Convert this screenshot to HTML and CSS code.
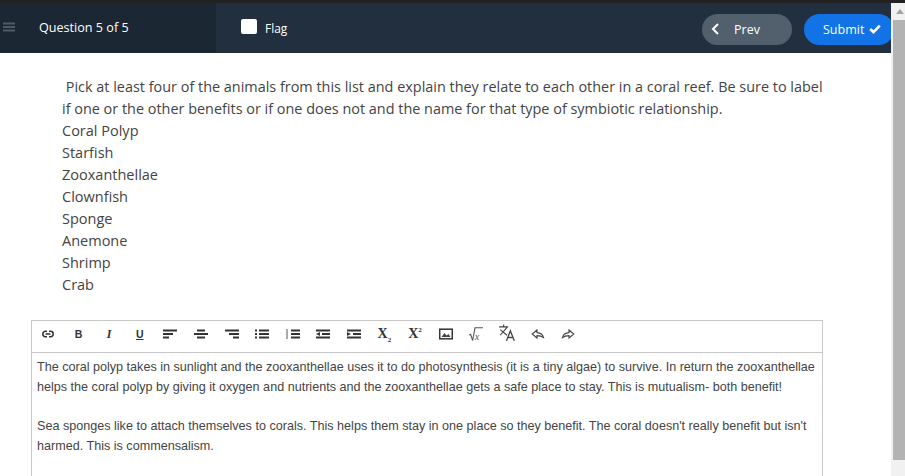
FILE: index.html
```html
<!DOCTYPE html>
<html lang="en">
<head>
<meta charset="utf-8">
<title>Question 5 of 5</title>
<link rel="stylesheet" href="styles.css">
</head>
<body>
<div class="topstrip"></div>
<div class="window">
  <div class="page">
    <header class="header">
      <div class="header-left">
        <svg class="menu" width="12" height="10" viewBox="0 0 12 10"><path d="M0 1.5h12M0 5h12M0 8.5h12" stroke="#4d5b68" stroke-width="2"/></svg>
        <span class="qcount">Question 5 of 5</span>
      </div>
      <div class="header-right">
        <label class="flag"><span class="checkbox"></span><span>Flag</span></label>
        <div class="nav">
          <button class="btn btn-prev"><svg width="9" height="12" viewBox="0 0 9 12"><path d="M7 1 2 6l5 5" fill="none" stroke="#fff" stroke-width="2"/></svg><span>Prev</span></button>
          <button class="btn btn-submit"><span>Submit</span><svg width="12" height="10" viewBox="0 0 12 10"><path d="M1.2 5 4.5 8.2 10.8 1.6" fill="none" stroke="#fff" stroke-width="2.6"/></svg></button>
        </div>
      </div>
    </header>
    <main class="content">
      <div class="question">
        <p class="prompt">&nbsp;Pick at least four of the animals from this list and explain they relate to each other in a coral reef. Be sure to label if one or the other benefits or if one does not and the name for that type of symbiotic relationship.</p>
        <ul class="animals">
          <li>Coral Polyp</li>
          <li>Starfish</li>
          <li>Zooxanthellae</li>
          <li>Clownfish</li>
          <li>Sponge</li>
          <li>Anemone</li>
          <li>Shrimp</li>
          <li>Crab</li>
        </ul>
      </div>
      <section class="editor">
        <div class="toolbar">
          <svg class="ti" viewBox="0 0 14 14"><path d="M6 4.3H4.5a2.7 2.7 0 0 0 0 5.4H6M8 4.3h1.500a2.700 2.700 0 0 1 0 5.400H8M4.500 7h5" fill="none" stroke="#333" stroke-width="1.500"/></svg>
          <span class="ti tb b">B</span>
          <span class="ti tb i">I</span>
          <span class="ti tb u">U</span>
          <svg class="ti" viewBox="0 0 14 14"><path d="M0 3.5h14M0 7h10M0 10.5h6" stroke="#333" stroke-width="2"/></svg>
          <svg class="ti" viewBox="0 0 14 14"><path d="M3 3.5h8M0 7h14M3 10.5h8" stroke="#333" stroke-width="2"/></svg>
          <svg class="ti" viewBox="0 0 14 14"><path d="M0 3.5h14M4 7h10M8 10.5h6" stroke="#333" stroke-width="2"/></svg>
          <svg class="ti" viewBox="0 0 14 14"><path d="M4 3.5h10M4 7h10M4 10.5h10M0 3.5h2M0 7h2M0 10.5h2" stroke="#333" stroke-width="2"/></svg>
          <svg class="ti" viewBox="0 0 14 14"><path d="M5 3.5h9M5 7h9M5 10.5h9" stroke="#333" stroke-width="2"/><path d="M0 3h2M0 5h2M0 7h2M0 9h2M0 11h2" stroke="#555" stroke-width="1"/></svg>
          <svg class="ti" viewBox="0 0 14 14"><path d="M0 3.5h14M6 7h8M0 10.5h14" stroke="#333" stroke-width="2"/><path d="M4 5v4L0 7z" fill="#333"/></svg>
          <svg class="ti" viewBox="0 0 14 14"><path d="M0 3.5h14M6 7h8M0 10.5h14" stroke="#333" stroke-width="2"/><path d="M0 5v4l4-2z" fill="#333"/></svg>
          <span class="ti script">X<sub>2</sub></span>
          <span class="ti script">X<sup>2</sup></span>
          <svg class="ti" viewBox="0 0 14 14"><rect x=".7" y="2.2" width="12.6" height="9.6" fill="none" stroke="#333" stroke-width="1.5"/><path d="M2.5 10 5.500 6l2 2.500L9.500 7l2 3z" fill="#444"/></svg>
          <svg class="ti" viewBox="0 0 14 14"><path d="M0 8 1.600 7.200 3.600 13.500 6 .8H14" fill="none" stroke="#555" stroke-width="1.100"/><text x="5.800" y="12.500" class="mathx">x</text></svg>
          <svg class="ti wide" viewBox="0 0 16 16"><path d="M1 2.500h8M5 .5v2M8 3 2 10M2 5l6 5" fill="none" stroke="#444" stroke-width="1"/><path d="M7.500 15 11 6l3.500 9M9 12h4.500" fill="none" stroke="#444" stroke-width="1.200"/></svg>
          <svg class="ti" viewBox="0 0 14 14"><path d="M6 3 1.200 7 6 11V8.600c2.500 0 4.500.4 6.500 2-.6-3-3-4.800-6.500-5z" fill="none" stroke="#444" stroke-width="1.100"/></svg>
          <svg class="ti" viewBox="0 0 14 14"><path d="M8 3l4.800 4L8 11V8.600c-2.500 0-4.500.4-6.500 2 .6-3 3-4.800 6.500-5z" fill="none" stroke="#444" stroke-width="1.100"/></svg>
        </div>
        <div class="body">
          <p>The coral polyp takes in sunlight and the zooxanthellae uses it to do photosynthesis (it is a tiny algae) to survive. In return the zooxanthellae helps the coral polyp by giving it oxygen and nutrients and the zooxanthellae gets a safe place to stay. This is mutualism- both benefit!</p>
          <p>Sea sponges like to attach themselves to corals. This helps them stay in one place so they benefit. The coral doesn't really benefit but isn't harmed. This is commensalism.</p>
        </div>
      </section>
    </main>
  </div>
  <div class="scrollbar">
    <div class="arrow"></div>
    <div class="thumb"></div>
  </div>
</div>
</body>
</html>
```
FILE: styles.css
```css
* { box-sizing: border-box; }
html, body { margin: 0; height: 100%; overflow: hidden; background: #fff; }
body { display: flex; flex-direction: column; font-family: "Open Sans", sans-serif; }
.topstrip { height: 3px; background: #222; flex: none; }
.window { flex: 1; display: flex; min-height: 0; }
.page { width: 891px; flex: none; overflow: hidden; }

.header { height: 50px; display: flex; background: #212f3e; color: #fff; }
.header-left { width: 216px; flex: none; display: flex; align-items: center; padding: 0 0 2px 3px; background: #1b2733; }
.menu { flex: none; }
.qcount { margin-left: 24px; font-size: 12.6px; }
.header-right { flex: 1; display: flex; align-items: center; justify-content: space-between; padding-left: 25px; }
.flag { display: flex; align-items: center; gap: 8px; font-size: 11.9px; }
.checkbox { width: 16px; height: 15px; background: #fff; border-radius: 2px; margin-bottom: 3px; }
.nav { display: flex; gap: 12px; margin: 2px -3px 0 0; }
.btn { height: 31px; width: 90px; border: 0; border-radius: 16px; color: #fff; font: 12.5px "Open Sans", sans-serif; display: flex; align-items: center; padding: 0; }
.btn-prev { background: #52606d; padding-left: 9px; gap: 14px; }
.btn-submit { background: #1273e6; padding-left: 19px; gap: 5px; }

.content { padding-top: 23px; }
.question { margin-left: 62px; width: 765px; color: #444; font-size: 14.43px; line-height: 22px; }
.prompt { margin: 0; }
.animals { list-style: none; margin: 0; padding: 0; font-size: 14.5px; }

.editor { margin: 24px 0 0 31px; width: 792px; border: 1px solid #c8c8c8; border-bottom: 0; height: 161px; overflow: hidden; }
.toolbar { height: 32px; border-bottom: 1px solid #c8c8c8; display: flex; align-items: center; padding: 0 0 5px 9px; gap: 16.6px; color: #333; }
.ti { width: 14px; height: 14px; flex: none; display: block; }
.wide { width: 18px; height: 18px; margin: -3px -2px 0 -2px; }
.tb { font: bold 10.5px/14px "Liberation Sans", sans-serif; text-align: center; }
.tb.i { font-style: italic; font-family: "Liberation Serif", serif; font-size: 12px; }
.tb.u { text-decoration: underline; }
.script { font: bold 14px/14px "Liberation Serif", serif; white-space: nowrap; text-align: left; }
.script sub, .script sup { font-size: 7px; line-height: 0; }
.mathx { font: italic 10px "Liberation Serif", serif; fill: #555; }
.body { padding: 4px 5px 0; font: 12.6px/20px "Liberation Sans", sans-serif; color: #444; }
.body p { margin: 0 0 19px; }

.scrollbar { width: 14px; flex: none; background: #f1f1f1; position: relative; padding-left: 2px; }
.arrow { height: 17px; background: #f1f1f1; position: relative; }
.arrow::after { content: ""; position: absolute; left: 3px; top: 6px; border: 4px solid transparent; border-top: 0; border-bottom: 5px solid #a3a3a3; }
.thumb { height: 440px; background: #b3b3b3; }
```
